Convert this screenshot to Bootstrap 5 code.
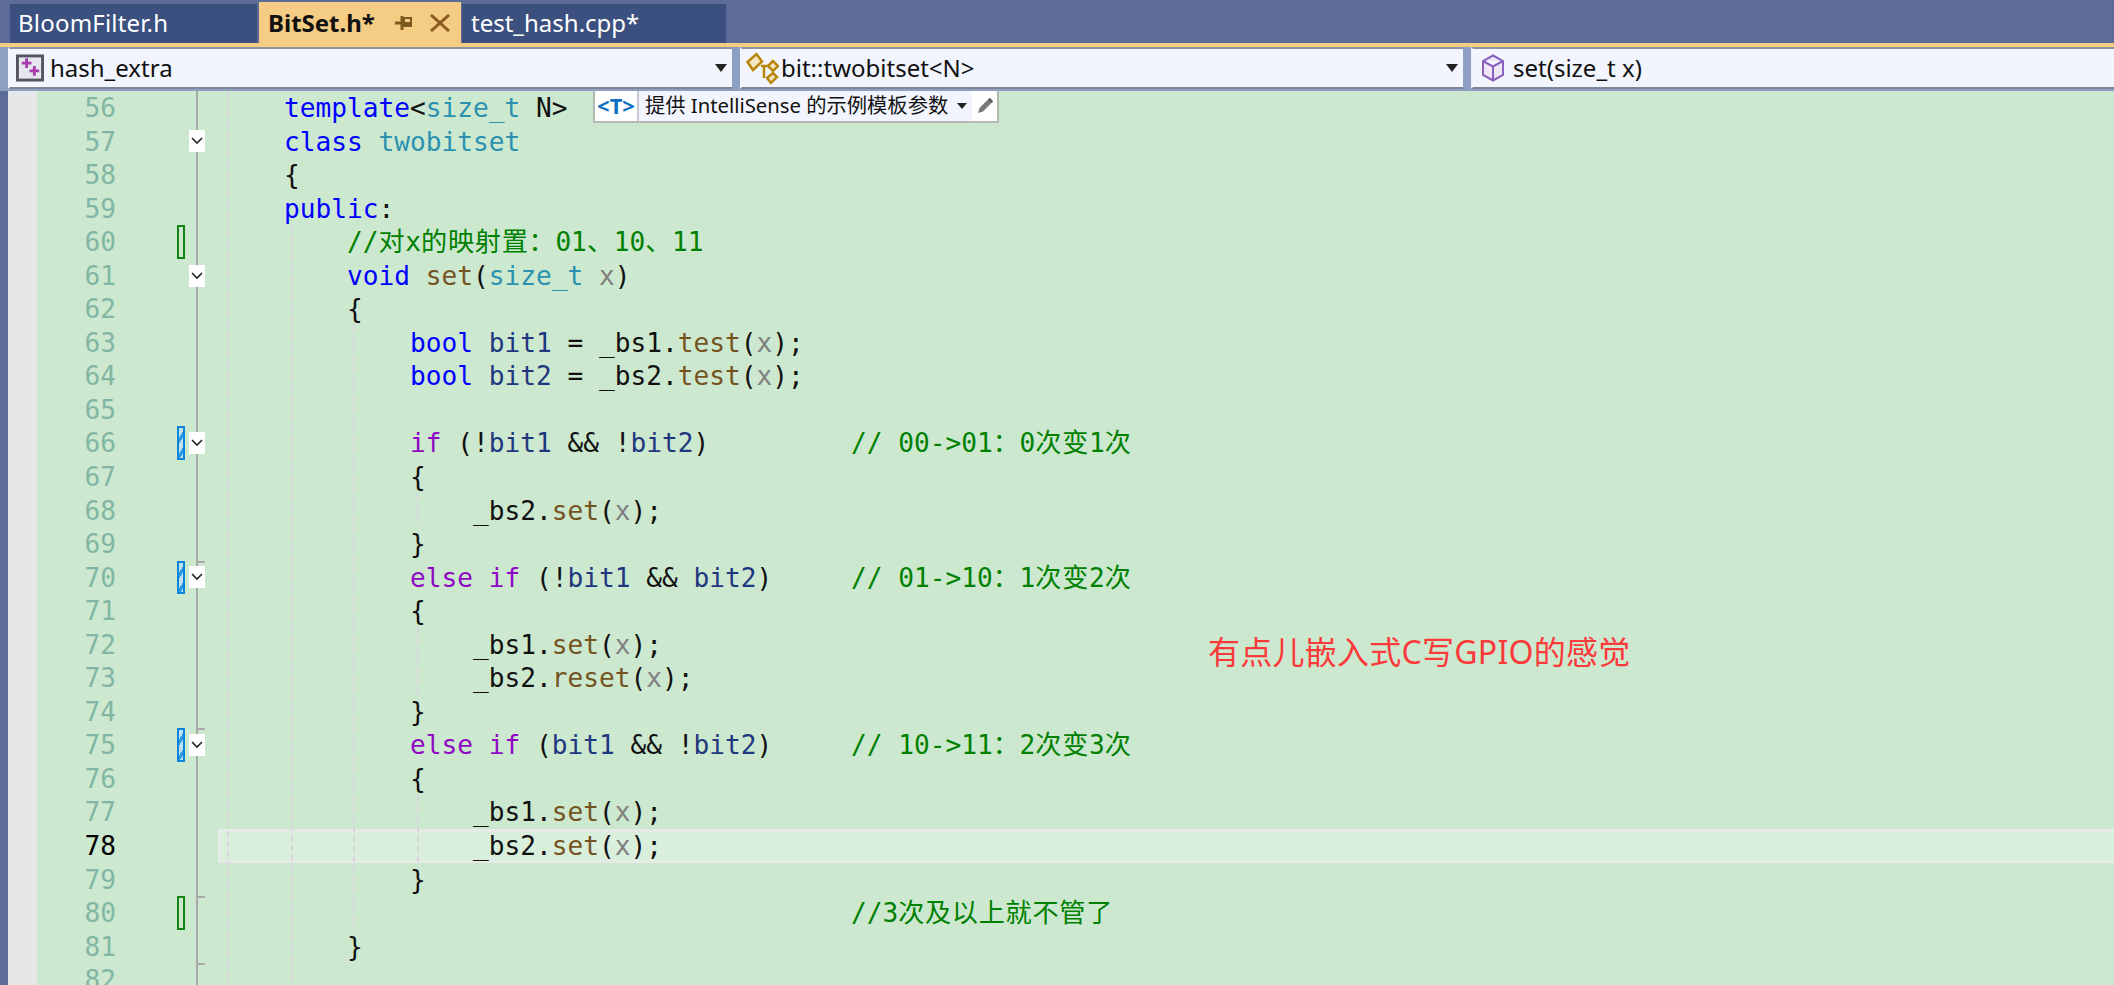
<!DOCTYPE html>
<html lang="zh">
<head>
<meta charset="utf-8">
<title>BitSet.h</title>
<link href="https://cdn.jsdelivr.net/npm/bootstrap@5.3.0/dist/css/bootstrap.min.css" rel="stylesheet">
<style>
html,body{height:985px;overflow:hidden;background:#cce8cf}
.ide{height:985px;width:2114px;font-family:"Noto Sans","Noto Sans CJK SC",sans-serif}
.tabstrip{height:43px;background:#5c6b97;padding-left:10px;gap:2px}
.dt{height:39px;width:247px;background:#3c5080;color:#fff;font-size:24px;line-height:37px;padding-left:9px}
.dt.t1{padding-left:8px;letter-spacing:.2px}
.dt.on{height:41px;width:202px;background:#f5cc84;color:#111;font-weight:700;padding-left:9px;line-height:40px}
.dt.t3{width:264px;margin-left:-1px}
.dt .pin{margin-left:20px}
.dt .cls{margin-left:17px}
.accent{height:4px;background:#f5cc84}
.combos{height:44px;background:#8e9fc4;padding-left:8px;gap:8px}
.cb{height:42px;background:#f2f5fd;border-top:2px solid #8f939f;border-bottom:2px solid #7f8595;border-left:2px solid #f2f5fd;font-size:24px;color:#111;line-height:36px}
.cb1{width:724px}.cb2{width:723px}.cb3{flex:1 1 auto}
.cb svg{flex:none}
.sp1{margin-left:6px}
.sp2{margin-left:2px}
.caret-dn{width:0;height:0;border-left:6px solid transparent;border-right:6px solid transparent;border-top:8px solid #222;flex:none;margin-right:5px}
.rail-a{width:8px;background:#5c6b97;flex:none}
.rail-b{width:29px;background:#e6e7e8;flex:none}
.edit{height:894px;background:#cce8cf}
.ro{height:33.55px;font-family:"DejaVu Sans Mono","Noto Sans CJK SC",monospace;font-size:26.16px;color:#111}
.ln{width:79px;text-align:right;color:#82b6a4;line-height:35.55px;flex:none}
.ln.cur{color:#000}
.mk{width:8px;margin-left:61px;margin-right:4px;flex:none;height:33.55px}
.mk.gr{border:2px solid #138413}
.mk.bl{border:2px solid #0b84d9;background:repeating-linear-gradient(120deg,#bfe3ee 0 5px,#2f9be0 5px 8px)}
.fd{width:16px;flex:none;background:linear-gradient(#a9a9a9,#a9a9a9) 7px 0/2px 100% no-repeat}
.fd.tk{background:linear-gradient(#a9a9a9,#a9a9a9) 7px 0/9px 2px no-repeat,linear-gradient(#a9a9a9,#a9a9a9) 7px 0/2px 100% no-repeat}
.fbox{width:16px;height:22px;background:#fff}
.co{flex:1 1 auto;margin-left:13px;border:3px solid transparent;border-right:0;line-height:29.55px;white-space:pre;min-width:0}
.co.cur{background:#daeedc;border-color:#e6ebe8}
.k{color:#0000ff}.y{color:#2b91af}.f{color:#74531f}.p{color:#808080}.v{color:#1f377f}.c{color:#8f08c4}.g{color:#008000}
.hz{font-family:"Noto Sans CJK SC",sans-serif;font-size:26.16px;letter-spacing:.7px;line-height:0}
.gd{width:2px;background:repeating-linear-gradient(#d9d6dd 0 6px,transparent 6px 10px)}
.g0{left:227px;top:0;height:894px}
.g1{left:291px;top:134px;height:760px}
.g2{left:353px;top:235px;height:604px}
.g3a{left:417px;top:403px;height:33px}
.g3b{left:417px;top:537px;height:67px}
.g3c{left:417px;top:705px;height:67px}
.itip{left:593px;top:0;width:406px;height:32px;background:#f2f5fd;border:2px solid #b5b9b5;border-top:0;font-family:"Noto Sans","Noto Sans CJK SC",sans-serif;font-size:20.3px;color:#111;line-height:29px}
.itip .tt{width:44px;background:#fff;color:#0e70c0;font-weight:700;border-right:2px solid #c8cad0;text-align:center;font-size:22px;line-height:28px;white-space:nowrap}
.itip .tx{padding-left:6px;width:313px;white-space:pre}
.itip .ar{width:20px}
.itip .pn{width:25px;background:#fff}
.note{left:1208px;top:541px;font-family:"Noto Sans","Noto Sans CJK SC",sans-serif;font-size:32px;line-height:40px;letter-spacing:.25px;color:#fb3a3a;white-space:nowrap}
</style>
</head>
<body class="m-0">
<div class="ide d-flex flex-column overflow-hidden">
  <div class="tabstrip d-flex align-items-end flex-none">
    <div class="dt t1">BloomFilter.h</div>
    <div class="dt on d-flex align-items-center">
      <span>BitSet.h*</span>
      <svg class="pin" width="18" height="16" viewBox="0 0 18 16"><path d="M0 8h7M7 1v14" stroke="#7c5a1f" stroke-width="3" fill="none"/><rect x="8" y="2" width="9" height="10" fill="#7c5a1f"/><rect x="10" y="4" width="5" height="3" fill="#f5cc84"/></svg>
      <svg class="cls" width="20" height="18" viewBox="0 0 20 18"><path d="M1 1l18 16M19 1L1 17" stroke="#8a5a20" stroke-width="3" fill="none"/></svg>
    </div>
    <div class="dt t3">test_hash.cpp*</div>
  </div>
  <div class="accent"></div>
  <div class="combos d-flex align-items-start">
    <div class="cb cb1 d-flex align-items-center">
      <svg class="sp1" width="28" height="28" viewBox="0 0 29 28"><rect x="1.500" y="1.500" width="26" height="25" fill="#e6e6ee" stroke="#55555f" stroke-width="3"/><path d="M6 9h10M11 4v10M14 17h10M19 12v10" stroke="#a83bb0" stroke-width="3" fill="none"/></svg>
      <span class="flex-grow-1 sp1">hash_extra</span>
      <i class="caret-dn"></i>
    </div>
    <div class="cb cb2 d-flex align-items-center">
      <svg class="ms-1" width="33" height="33" viewBox="0 0 33 33"><g fill="#f3e6c4" stroke="#b8860b" stroke-width="2.500"><path d="M1.500 10L10.500 2l5.500 7.500L7 18z"/><path d="M22 14l5-5 5 5-5 5z"/><path d="M21 26l6-5 4 4-6 6z"/></g><path d="M15 14h7M18 14v12" stroke="#b8860b" stroke-width="2.500" fill="none"/></svg>
      <span class="flex-grow-1 sp2">bit::twobitset&lt;N&gt;</span>
      <i class="caret-dn"></i>
    </div>
    <div class="cb cb3 d-flex align-items-center">
      <svg class="ms-2" width="24" height="28" viewBox="0 0 24 28"><path d="M12 1.500l10 5.500v14l-10 5.500-10-5.500v-14zM2 7l10 5.500L22 7M12 12.500v14" fill="#ece6f5" stroke="#8a60c0" stroke-width="2"/></svg>
      <span class="ms-2">set(size_t x)</span>
    </div>
  </div>
  <div class="edit d-flex position-relative overflow-hidden">
    <div class="rail-a"></div>
    <div class="rail-b"></div>
    <div class="flex-grow-1 d-flex flex-column">
      <div class="ro d-flex"><div class="ln">56</div><div class="mk"></div><div class="fd"></div><div class="co">    <span class="k">template</span>&lt;<span class="y">size_t</span> N&gt;</div></div>
      <div class="ro d-flex"><div class="ln">57</div><div class="mk"></div><div class="fd d-flex align-items-center"><div class="fbox d-flex align-items-center justify-content-center"><svg width="12" height="8" viewBox="0 0 12 8"><path d="M1 1l5 5 5-5" stroke="#222" stroke-width="1.600" fill="none"/></svg></div></div><div class="co">    <span class="k">class</span> <span class="y">twobitset</span></div></div>
      <div class="ro d-flex"><div class="ln">58</div><div class="mk"></div><div class="fd"></div><div class="co">    {</div></div>
      <div class="ro d-flex"><div class="ln">59</div><div class="mk"></div><div class="fd"></div><div class="co">    <span class="k">public</span>:</div></div>
      <div class="ro d-flex"><div class="ln">60</div><div class="mk gr"></div><div class="fd"></div><div class="co">        <span class="g">//<span class="hz">对</span>x<span class="hz">的映射置：</span>01<span class="hz">、</span>10<span class="hz">、</span>11</span></div></div>
      <div class="ro d-flex"><div class="ln">61</div><div class="mk"></div><div class="fd d-flex align-items-center"><div class="fbox d-flex align-items-center justify-content-center"><svg width="12" height="8" viewBox="0 0 12 8"><path d="M1 1l5 5 5-5" stroke="#222" stroke-width="1.600" fill="none"/></svg></div></div><div class="co">        <span class="k">void</span> <span class="f">set</span>(<span class="y">size_t</span> <span class="p">x</span>)</div></div>
      <div class="ro d-flex"><div class="ln">62</div><div class="mk"></div><div class="fd"></div><div class="co">        {</div></div>
      <div class="ro d-flex"><div class="ln">63</div><div class="mk"></div><div class="fd"></div><div class="co">            <span class="k">bool</span> <span class="v">bit1</span> = _bs1.<span class="f">test</span>(<span class="p">x</span>);</div></div>
      <div class="ro d-flex"><div class="ln">64</div><div class="mk"></div><div class="fd"></div><div class="co">            <span class="k">bool</span> <span class="v">bit2</span> = _bs2.<span class="f">test</span>(<span class="p">x</span>);</div></div>
      <div class="ro d-flex"><div class="ln">65</div><div class="mk"></div><div class="fd"></div><div class="co"> </div></div>
      <div class="ro d-flex"><div class="ln">66</div><div class="mk bl"></div><div class="fd d-flex align-items-center"><div class="fbox d-flex align-items-center justify-content-center"><svg width="12" height="8" viewBox="0 0 12 8"><path d="M1 1l5 5 5-5" stroke="#222" stroke-width="1.600" fill="none"/></svg></div></div><div class="co">            <span class="c">if</span> (!<span class="v">bit1</span> &amp;&amp; !<span class="v">bit2</span>)         <span class="g">// 00-&gt;01<span class="hz">：</span>0<span class="hz">次变</span>1<span class="hz">次</span></span></div></div>
      <div class="ro d-flex"><div class="ln">67</div><div class="mk"></div><div class="fd"></div><div class="co">            {</div></div>
      <div class="ro d-flex"><div class="ln">68</div><div class="mk"></div><div class="fd"></div><div class="co">                _bs2.<span class="f">set</span>(<span class="p">x</span>);</div></div>
      <div class="ro d-flex"><div class="ln">69</div><div class="mk"></div><div class="fd"></div><div class="co">            }</div></div>
      <div class="ro d-flex"><div class="ln">70</div><div class="mk bl"></div><div class="fd tk d-flex align-items-center"><div class="fbox d-flex align-items-center justify-content-center"><svg width="12" height="8" viewBox="0 0 12 8"><path d="M1 1l5 5 5-5" stroke="#222" stroke-width="1.600" fill="none"/></svg></div></div><div class="co">            <span class="c">else if</span> (!<span class="v">bit1</span> &amp;&amp; <span class="v">bit2</span>)     <span class="g">// 01-&gt;10<span class="hz">：</span>1<span class="hz">次变</span>2<span class="hz">次</span></span></div></div>
      <div class="ro d-flex"><div class="ln">71</div><div class="mk"></div><div class="fd"></div><div class="co">            {</div></div>
      <div class="ro d-flex"><div class="ln">72</div><div class="mk"></div><div class="fd"></div><div class="co">                _bs1.<span class="f">set</span>(<span class="p">x</span>);</div></div>
      <div class="ro d-flex"><div class="ln">73</div><div class="mk"></div><div class="fd"></div><div class="co">                _bs2.<span class="f">reset</span>(<span class="p">x</span>);</div></div>
      <div class="ro d-flex"><div class="ln">74</div><div class="mk"></div><div class="fd"></div><div class="co">            }</div></div>
      <div class="ro d-flex"><div class="ln">75</div><div class="mk bl"></div><div class="fd tk d-flex align-items-center"><div class="fbox d-flex align-items-center justify-content-center"><svg width="12" height="8" viewBox="0 0 12 8"><path d="M1 1l5 5 5-5" stroke="#222" stroke-width="1.600" fill="none"/></svg></div></div><div class="co">            <span class="c">else if</span> (<span class="v">bit1</span> &amp;&amp; !<span class="v">bit2</span>)     <span class="g">// 10-&gt;11<span class="hz">：</span>2<span class="hz">次变</span>3<span class="hz">次</span></span></div></div>
      <div class="ro d-flex"><div class="ln">76</div><div class="mk"></div><div class="fd"></div><div class="co">            {</div></div>
      <div class="ro d-flex"><div class="ln">77</div><div class="mk"></div><div class="fd"></div><div class="co">                _bs1.<span class="f">set</span>(<span class="p">x</span>);</div></div>
      <div class="ro d-flex"><div class="ln cur">78</div><div class="mk"></div><div class="fd"></div><div class="co cur">                _bs2.<span class="f">set</span>(<span class="p">x</span>);</div></div>
      <div class="ro d-flex"><div class="ln">79</div><div class="mk"></div><div class="fd"></div><div class="co">            }</div></div>
      <div class="ro d-flex"><div class="ln">80</div><div class="mk gr"></div><div class="fd tk"></div><div class="co">                                        <span class="g">//3<span class="hz">次及以上就不管了</span></span></div></div>
      <div class="ro d-flex"><div class="ln">81</div><div class="mk"></div><div class="fd"></div><div class="co">        }</div></div>
      <div class="ro d-flex"><div class="ln">82</div><div class="mk"></div><div class="fd tk"></div><div class="co"> </div></div>
    </div>
    <div class="gd g0 position-absolute"></div>
    <div class="gd g1 position-absolute"></div>
    <div class="gd g2 position-absolute"></div>
    <div class="gd g3a position-absolute"></div>
    <div class="gd g3b position-absolute"></div>
    <div class="gd g3c position-absolute"></div>
    <div class="itip position-absolute d-flex">
      <div class="tt">&lt;T&gt;</div>
      <div class="tx">提供 IntelliSense 的示例模板参数</div>
      <div class="ar d-flex align-items-center justify-content-center"><svg width="10" height="6" viewBox="0 0 10 6"><path d="M0 0h10L5 6z" fill="#222"/></svg></div>
      <div class="pn d-flex align-items-center justify-content-center"><svg width="20" height="20" viewBox="0 0 20 20"><path d="M3 17l1.500-5L14 2.500l3.500 3.500L8 15.500z" fill="#7a7a7a"/><path d="M14 2.500l3.500 3.500" stroke="#555" stroke-width="2"/></svg></div>
    </div>
    <div class="note position-absolute">有点儿嵌入式C写GPIO的感觉</div>
  </div>
</div>
<script src="https://cdn.jsdelivr.net/npm/bootstrap@5.3.0/dist/js/bootstrap.bundle.min.js"></script>
</body>
</html>
